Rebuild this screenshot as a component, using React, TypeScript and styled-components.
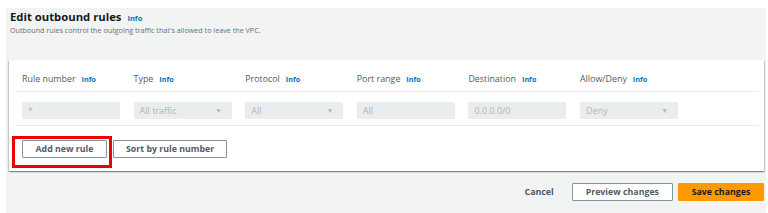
import React from 'react';
import styled, { createGlobalStyle } from 'styled-components';

const GlobalStyle = createGlobalStyle`
  html, body {
    margin: 0;
    padding: 0;
    background: #ffffff;
  }
  body {
    font-family: 'Open Sans', 'Noto Sans', Arial, sans-serif;
    color: #16191f;
  }
`;

const columns = [
  { label: 'Rule number', value: '*', select: false },
  { label: 'Type', value: 'All traffic', select: true },
  { label: 'Protocol', value: 'All', select: true },
  { label: 'Port range', value: 'All', select: false },
  { label: 'Destination', value: '0.0.0.0/0', select: false },
  { label: 'Allow/Deny', value: 'Deny', select: true },
];

const App = () => {
  return (
    <>
      <GlobalStyle />
      <Page>
        <Panel>
          <Heading>
            <TitleRow>
              <Title>Edit outbound rules</Title>
              <InfoLink>Info</InfoLink>
            </TitleRow>
            <Description>
              Outbound rules control the outgoing traffic that's allowed to leave the VPC.
            </Description>
          </Heading>
          <Card>
            <HeaderRow>
              {columns.map((col) => (
                <ColumnLabel key={col.label}>
                  {col.label}
                  <InfoLink small>Info</InfoLink>
                </ColumnLabel>
              ))}
            </HeaderRow>
            <InputRow>
              {columns.map((col) => (
                <Field key={col.label}>
                  <span>{col.value}</span>
                  {col.select && <Caret>▼</Caret>}
                </Field>
              ))}
            </InputRow>
            <ActionRow>
              <Highlighted>
                <Button>Add new rule</Button>
                <RedBox />
              </Highlighted>
              <Button>Sort by rule number</Button>
            </ActionRow>
          </Card>
          <Footer>
            <LinkButton>Cancel</LinkButton>
            <Button wide>Preview changes</Button>
            <PrimaryButton>Save changes</PrimaryButton>
          </Footer>
        </Panel>
      </Page>
    </>
  );
};

const Page = styled.div`
  width: 768px;
  height: 213px;
  padding: 8px 2px 0 6px;
  box-sizing: border-box;
  overflow: hidden;
`;

const Panel = styled.div`
  background: #f2f3f3;
  height: 205px;
  padding: 0 2px 0 3px;
`;

const Heading = styled.div`
  padding: 1px 0 0 1px;
  height: 52px;
  box-sizing: border-box;
`;

const TitleRow = styled.div`
  display: flex;
  align-items: baseline;
  gap: 6px;
`;

const Title = styled.h1`
  margin: 0;
  font-size: 11.3px;
  font-weight: 700;
  line-height: 16px;
  color: #16191f;
`;

const InfoLink = styled.span<{ small?: boolean }>`
  font-size: ${(p) => (p.small ? '7.2px' : '7.5px')};
  font-weight: 700;
  color: #0073bb;
  margin-left: ${(p) => (p.small ? '6px' : '0')};
`;

const Description = styled.p`
  margin: 0;
  font-size: 7.2px;
  line-height: 11px;
  color: #687078;
`;

const Card = styled.div`
  background: #ffffff;
  box-shadow: 0 1px 1px rgba(0, 28, 36, 0.3), 1px 1px 1px rgba(0, 28, 36, 0.15),
    -1px 1px 1px rgba(0, 28, 36, 0.15);
  padding: 0 5px 0 7px;
`;

const Grid = styled.div`
  display: grid;
  grid-template-columns: repeat(6, 98px);
  column-gap: 13.6px;
  padding-left: 6px;
  border-bottom: 1px solid #eaeded;
  box-sizing: border-box;
`;

const HeaderRow = styled(Grid)`
  height: 32px;
  align-items: center;
  padding-top: 5px;
`;

const ColumnLabel = styled.div`
  font-size: 8.9px;
  color: #545b64;
  white-space: nowrap;
  display: flex;
  align-items: baseline;
`;

const InputRow = styled(Grid)`
  height: 34px;
  padding-top: 10px;
`;

const Field = styled.div`
  height: 17px;
  background: #eaeded;
  display: flex;
  align-items: center;
  justify-content: space-between;
  padding: 0 10px 0 6px;
  font-size: 9px;
  color: #aab7b8;
`;

const Caret = styled.span`
  font-size: 6.5px;
  color: #aab7b8;
`;

const ActionRow = styled.div`
  height: 45px;
  display: flex;
  align-items: flex-start;
  gap: 6px;
  padding: 14px 0 0 6px;
  box-sizing: border-box;
`;

const Highlighted = styled.div`
  position: relative;
  display: flex;
`;

const RedBox = styled.div`
  position: absolute;
  left: -10px;
  top: -4px;
  right: -5px;
  bottom: -10px;
  border: 3px solid #ee0000;
  pointer-events: none;
`;

const Button = styled.button<{ wide?: boolean }>`
  height: 18px;
  box-sizing: border-box;
  padding: 0 ${(p) => (p.wide ? '13px' : '12px')};
  min-width: 85px;
  background: #ffffff;
  border: 1px solid #879596;
  border-radius: 1px;
  font-family: inherit;
  font-size: 8.8px;
  font-weight: 700;
  color: #545b64;
  white-space: nowrap;
  cursor: pointer;
`;

const Footer = styled.div`
  display: flex;
  justify-content: flex-end;
  align-items: flex-start;
  height: 42px;
  gap: 5px;
  padding-top: 12px;
  box-sizing: border-box;
`;

const LinkButton = styled.button`
  height: 18px;
  background: none;
  border: none;
  font-family: inherit;
  font-size: 8.8px;
  font-weight: 700;
  color: #545b64;
  margin-right: 13px;
  padding: 0;
`;

const PrimaryButton = styled.button`
  height: 18px;
  box-sizing: border-box;
  width: 86px;
  background: #ff9900;
  border: 1px solid #ff9900;
  border-radius: 1px;
  font-family: inherit;
  font-size: 8.8px;
  font-weight: 700;
  color: #16191f;
  cursor: pointer;
`;

export default App;
